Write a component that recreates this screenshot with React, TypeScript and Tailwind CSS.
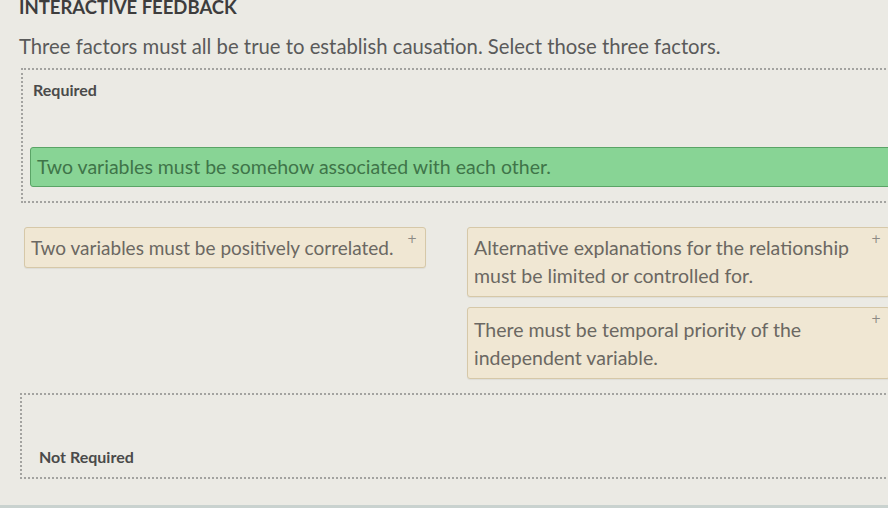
import React from "react";

function Handle() {
  return (
    <span className="absolute right-[8px] top-[5px] text-[12px] leading-none text-[#8d8a84] font-['DejaVu_Sans',sans-serif]">
      +
    </span>
  );
}

function Item({ children, className = "" }: { children: React.ReactNode; className?: string }) {
  return (
    <div
      className={
        "relative rounded-[3px] border border-[#d6c8a8] bg-[#f0e7d3] pl-[6px] pr-[14px] leading-[28px] text-[#6b6862] shadow-[0_1px_1px_rgba(0,0,0,0.06)] " +
        className
      }
    >
      {children}
      <Handle />
    </div>
  );
}

export default function App() {
  return (
    <div className="w-[888px] h-[508px] overflow-hidden bg-[#ebeae4] font-['Lato',sans-serif] flex flex-col">
      <div className="w-[930px] pl-[19px] flex-1">
        <h2 className="mt-[-2px] text-[18.5px] font-bold leading-[18px] text-[#3d3d3d]">
          INTERACTIVE FEEDBACK
        </h2>
        <p className="mt-[17px] text-[20.3px] leading-[26px] text-[#5a5a5a]">
          Three factors must all be true to establish causation. Select those three factors.
        </p>

        <div className="mt-[9px] ml-[2px] h-[135px] border-2 border-dotted border-[#a3a3a0] pt-[10px] pl-[10px]">
          <div className="text-[16px] font-bold leading-[20px] text-[#4a4a4a]">Required</div>
          <div className="mt-[47px] ml-[-3px] flex h-[40px] items-center rounded-[3px] border border-[#5aa466] bg-[#88d495] pl-[6px] text-[19.5px] text-[#3f7549]">
            Two variables must be somehow associated with each other.
          </div>
        </div>

        <div className="mt-[24px] flex items-start">
          <div className="ml-[5px] w-[402px]">
            <Item className="h-[41px] flex items-center whitespace-nowrap text-[19px]">
              Two variables must be positively correlated.
            </Item>
          </div>
          <div className="ml-[41px] flex w-[423px] flex-col gap-[10px]">
            <Item className="h-[70px] pt-[6px] text-[19.5px]">
              Alternative explanations for the relationship
              <br />
              must be limited or controlled for.
            </Item>
            <Item className="h-[72px] pt-[8px] text-[19.5px]">
              There must be temporal priority of the
              <br />
              independent variable.
            </Item>
          </div>
        </div>

        <div className="mt-[14px] ml-[1px] flex h-[86px] flex-col justify-end border-2 border-dotted border-[#a3a3a0] pb-[10px] pl-[17px]">
          <div className="text-[16px] font-bold leading-[20px] text-[#4a4a4a]">Not Required</div>
        </div>
      </div>
      <div className="h-[3px] bg-[#c9d2cf]" />
    </div>
  );
}
